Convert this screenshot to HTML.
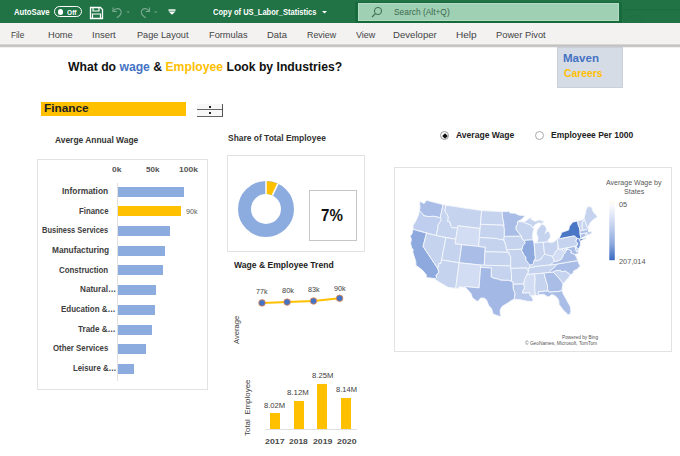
<!DOCTYPE html>
<html><head><meta charset="utf-8">
<style>
*{margin:0;padding:0;box-sizing:border-box}
html,body{width:680px;height:456px;overflow:hidden;background:#fff;font-family:"Liberation Sans",sans-serif}
.a{position:absolute;white-space:nowrap}
#tb{position:absolute;left:0;top:0;width:680px;height:23px;background:#217346}
#rb{position:absolute;left:0;top:23px;width:680px;height:21px;background:#f3f2f1}
#rbl{position:absolute;left:0;top:44px;width:680px;height:3px;background:linear-gradient(#e2e1e0,#bdbcbb 60%,#cfcfcf)}
#rbl2{position:absolute;left:0;top:47px;width:680px;height:1px;background:#f1f1f1}
.tab{position:absolute;top:29px;font-size:9.4px;line-height:11px;color:#444}
.wt{color:#fff}
.lbl{font-size:8.6px;color:#333;font-weight:bold}
.cat{position:absolute;font-size:8px;color:#404040;text-align:right;width:80px;line-height:10px;font-weight:bold}
.bar{position:absolute;background:#8cabdf;height:10px;left:117.5px}
.box{position:absolute;border:1px solid #e2e2e2;background:#fff}
.dl{position:absolute;font-size:7.2px;color:#404040;line-height:9px}
.yr{position:absolute;font-size:8.4px;color:#404040;line-height:10px;font-weight:bold}
</style></head><body>
<div id="tb"></div>
<div id="rb"></div>
<div id="rbl"></div>
<div id="rbl2"></div>
<!-- title bar -->
<div class="a" style="left:54.1px;top:5.5px;width:27.7px;height:11.8px;border:1.3px solid #fff;border-radius:6px"></div>
<div class="a" style="left:57.7px;top:9px;width:5.6px;height:5.6px;background:#fff;border-radius:50%"></div>
<svg class="a" style="left:89px;top:6px" width="15" height="14" viewBox="0 0 15 14">
<path d="M1.5 1.5h10l2 2v9h-12z" fill="none" stroke="#fff" stroke-width="1.3"/>
<path d="M4 1.5v3.5h6v-3.5" fill="none" stroke="#fff" stroke-width="1.2"/>
<path d="M3.5 12.5v-4.5h8v4.5" fill="none" stroke="#fff" stroke-width="1.2"/>
</svg>
<svg class="a" style="left:110px;top:5px;opacity:.4" width="50" height="14" viewBox="0 0 50 14">
<path d="M3 2.5v4h4" fill="none" stroke="#fff" stroke-width="1.1"/>
<path d="M3.3 6.3c1.5-2.5 4.5-3.5 6.5-2s2 5-1 7l-2 1.5" fill="none" stroke="#fff" stroke-width="1.1"/>
<path d="M16.5 6.5h3.4l-1.7 1.6z" fill="#fff"/>
<path d="M39.5 2.5v4h-4" fill="none" stroke="#fff" stroke-width="1.1"/>
<path d="M39.2 6.3c-1.5-2.5-4.5-3.5-6.5-2s-2 5 1 7l2 1.5" fill="none" stroke="#fff" stroke-width="1.1"/>
<path d="M44 6.5h3.4l-1.7 1.6z" fill="#fff"/>
</svg>
<svg class="a" style="left:168px;top:8.5px" width="8" height="6" viewBox="0 0 8 6"><path d="M0.5 0.3h7v1.5h-7z" fill="#fff"/><path d="M0.5 2.6h7l-3.5 3.2z" fill="#fff"/></svg>
<svg class="a" style="left:321.5px;top:10.5px" width="5" height="3" viewBox="0 0 5 3"><path d="M0 0h5l-2.5 2.6z" fill="#fff"/></svg>
<div class="a" style="left:355px;top:1.6px;width:267px;height:21px;background:#176a3b"></div>
<div class="a" style="left:357.6px;top:2.9px;width:261.7px;height:18px;background:#a0d0b3;border:1px solid #b2dcc3"></div>
<div class="a" style="left:623px;top:9px;width:57px;height:1.5px;background:#1d6a3f;opacity:.6"></div>
<div class="a" style="left:620px;top:0;width:60px;height:23px;overflow:hidden"><div class="a" style="left:5px;top:15px;width:18px;height:18px;border:1px solid #1b6a3c;border-radius:50%;opacity:.5"></div></div>
<svg class="a" style="left:371px;top:6px" width="12" height="12" viewBox="0 0 12 12">
<circle cx="7" cy="5" r="3.6" fill="none" stroke="#3b6b50" stroke-width="1"/><path d="M4.4 7.6L1 11" stroke="#3b6b50" stroke-width="1.1"/>
</svg>
<!-- ribbon tabs -->
<!-- sheet title -->
<div class="a" style="left:557px;top:47px;width:66px;height:41px;background:#d6dce5;border:1px solid #c9d0da"></div>
<!-- finance selector -->
<div class="a" style="left:41.2px;top:102px;width:144.8px;height:14.4px;background:#ffc000"></div>
<div class="a" style="left:197px;top:104px;width:26px;height:13px;background:#f7f7f7;border-right:1px solid #555"></div>
<div class="a" style="left:197px;top:109px;width:25px;height:1px;background:#666"></div>
<div class="a" style="left:197px;top:116px;width:25px;height:1px;background:#666"></div>
<div class="a" style="left:209px;top:105.5px;width:2px;height:2px;background:#222"></div>
<div class="a" style="left:209px;top:112px;width:2px;height:2px;background:#222"></div>
<!-- labels -->
<!-- radios -->
<div class="a" style="left:440px;top:131px;width:9px;height:9px;border:1px solid #999;border-radius:50%;background:#fff"></div>
<div class="a" style="left:442.5px;top:133.5px;width:4px;height:4px;background:#111;transform:rotate(45deg)"></div>
<div class="a" style="left:535px;top:131px;width:9px;height:9px;border:1px solid #aaa;border-radius:50%;background:#fff"></div>
<!-- bar chart -->
<div class="box" style="left:37px;top:159px;width:171px;height:231px"></div>
<div class="a" style="left:117px;top:183px;width:1px;height:198px;background:#e0e0e0"></div>
<div class="bar" style="top:186.5px;width:66.6px;background:#8cabdf"></div>
<div class="bar" style="top:206.3px;width:63.7px;background:#ffc000"></div>
<div class="bar" style="top:226.0px;width:52.8px;background:#8cabdf"></div>
<div class="bar" style="top:245.7px;width:47.9px;background:#8cabdf"></div>
<div class="bar" style="top:265.4px;width:45.1px;background:#8cabdf"></div>
<div class="bar" style="top:285.1px;width:38.5px;background:#8cabdf"></div>
<div class="bar" style="top:304.8px;width:37.5px;background:#8cabdf"></div>
<div class="bar" style="top:324.5px;width:34.3px;background:#8cabdf"></div>
<div class="bar" style="top:344.2px;width:28.7px;background:#8cabdf"></div>
<div class="bar" style="top:363.9px;width:16.2px;background:#8cabdf"></div>
<!-- donut -->
<div class="box" style="left:226.5px;top:155px;width:138px;height:96.5px"></div>
<svg class="a" style="left:226px;top:169px" width="80" height="80" viewBox="0 0 80 80">
<circle cx="40" cy="40" r="21.5" fill="none" stroke="#8cabdf" stroke-width="13"/>
<path d="M40.00,18.50 A21.5,21.5 0 0 1 49.15,20.55" fill="none" stroke="#ffc000" stroke-width="13"/><line x1="40.00" y1="25.00" x2="40.00" y2="12.00" stroke="#fff" stroke-width="1.5"/><line x1="46.39" y1="26.43" x2="51.92" y2="14.66" stroke="#fff" stroke-width="1.5"/>
</svg>
<div class="box" style="left:308.5px;top:190px;width:48px;height:50.5px;border-color:#c6c6c6"></div>
<!-- trend -->
<svg class="a" style="left:225px;top:280px" width="140" height="70" viewBox="0 0 140 70">
<polyline points="37,22.9 62.1,22.1 88.5,21 114.6,18.3" fill="none" stroke="#ffc000" stroke-width="2"/>
<circle cx="37" cy="22.9" r="3.3" fill="#4472c4" stroke="#f08a4b" stroke-width=".8"/>
<circle cx="62.1" cy="22.1" r="3.3" fill="#4472c4" stroke="#f08a4b" stroke-width=".8"/>
<circle cx="88.5" cy="21" r="3.3" fill="#4472c4" stroke="#f08a4b" stroke-width=".8"/>
<circle cx="114.6" cy="18.3" r="3.3" fill="#4472c4" stroke="#f08a4b" stroke-width=".8"/>
</svg>
<div class="a" style="left:231.8px;top:344.4px;font-size:7.65px;line-height:10px;color:#404040;transform:rotate(-90deg);transform-origin:0 0">Average</div>
<!-- employee bars -->
<div class="a" style="left:265px;top:429px;width:92px;height:1px;background:#e0e0e0"></div>
<div class="a" style="left:270px;top:413px;width:9.5px;height:16px;background:#ffc000"></div>
<div class="a" style="left:294px;top:400.5px;width:9.5px;height:28.5px;background:#ffc000"></div>
<div class="a" style="left:317px;top:383.5px;width:10px;height:45.5px;background:#ffc000"></div>
<div class="a" style="left:341px;top:398px;width:10px;height:31px;background:#ffc000"></div>
<div class="a" style="left:243px;top:436.2px;font-size:7.95px;line-height:10px;color:#404040;transform:rotate(-90deg);transform-origin:0 0">Total&nbsp; Employee</div>
<!-- map -->
<div class="box" style="left:394px;top:167px;width:278px;height:185px"></div>
<svg class="a" style="left:0;top:0" width="680" height="456" viewBox="0 0 680 456">
<g stroke="#f4f7fc" stroke-width=".9" stroke-linejoin="round">
<path fill="#a9bde6" d="M419.9,201.3 424.1,203.6 426.5,200.3 443.1,204.6 440.6,215.9 440.5,217.8 434.1,216.3 429.2,216.5 426.9,216.4 423.8,215.7 422.4,213.7 421.2,212.2 419.3,211.1 420.0,207.8 419.7,203.4Z"/>
<path fill="#bfcdee" d="M419.3,211.1 421.2,212.2 422.4,213.7 423.8,215.7 426.9,216.4 429.2,216.5 434.1,216.3 440.5,217.8 441.4,219.9 439.6,222.7 437.9,225.2 438.0,227.5 436.2,235.5 413.0,229.3 413.0,225.5 416.0,220.7 418.6,214.4Z"/>
<path fill="#8ea9de" d="M413.0,229.3 426.5,233.2 423.1,246.4 437.8,268.5 438.9,272.1 436.1,275.6 436.5,277.5 435.4,278.6 426.3,277.6 426.3,274.9 423.0,270.8 420.5,268.6 415.9,265.5 415.8,261.5 413.8,255.3 412.8,252.1 413.2,249.4 411.7,248.0 410.6,243.4 411.4,239.4 410.2,236.1 412.0,233.8Z"/>
<path fill="#c5d3ef" d="M426.5,233.2 445.9,237.5 440.9,263.5 438.9,263.6 437.8,268.5 423.1,246.4Z"/>
<path fill="#c5d3ef" d="M443.1,204.6 446.0,205.2 445.0,209.7 445.6,212.4 446.6,213.4 448.2,216.5 448.1,220.1 447.5,221.4 449.8,221.6 451.4,227.0 451.9,227.5 457.6,228.0 455.8,239.2 436.2,235.5 438.0,227.5 437.9,225.2 439.6,222.7 441.4,219.9 440.5,217.8 440.6,215.9Z"/>
<path fill="#c5d3ef" d="M446.0,205.2 481.6,210.6 480.1,228.5 457.9,225.8 457.6,228.0 451.9,227.5 451.4,227.0 449.8,221.6 447.5,221.4 448.1,220.1 448.2,216.5 446.6,213.4 445.6,212.4 445.0,209.7Z"/>
<path fill="#d2dcf2" d="M457.9,225.8 480.1,228.5 478.6,246.6 455.0,243.8Z"/>
<path fill="#c5d3ef" d="M445.9,237.5 455.8,239.2 455.0,243.8 461.7,244.7 459.2,262.8 441.6,259.9Z"/>
<path fill="#a9bde6" d="M461.7,244.7 485.3,247.1 484.2,265.4 459.2,262.8Z"/>
<path fill="#c5d3ef" d="M441.6,259.9 459.2,262.8 455.7,288.4 448.0,287.3 434.9,279.6 435.4,278.6 436.5,277.5 436.1,275.6 438.9,272.1 437.8,268.5 438.9,263.6 440.9,263.5Z"/>
<path fill="#d2dcf2" d="M459.2,262.8 480.8,265.1 479.1,287.9 465.3,286.6 465.6,287.6 459.2,286.8 458.9,288.9 455.7,288.4Z"/>
<path fill="#c5d3ef" d="M481.6,210.6 502.1,211.6 502.4,216.0 503.2,220.5 504.0,225.1 504.0,225.3 480.5,224.3Z"/>
<path fill="#c5d3ef" d="M480.5,224.3 504.0,225.3 504.0,228.2 504.4,228.2 504.3,236.4 503.8,240.0 504.3,241.0 501.8,239.3 499.2,239.6 497.6,238.6 479.3,237.5Z"/>
<path fill="#c5d3ef" d="M479.3,237.5 497.6,238.6 499.2,239.6 501.8,239.3 504.3,241.0 505.5,244.1 506.1,246.4 506.6,249.7 508.2,252.3 485.0,251.7 485.3,247.1 478.6,246.6Z"/>
<path fill="#c5d3ef" d="M485.0,251.7 508.2,252.3 509.4,252.8 508.9,254.2 510.7,256.2 510.7,266.0 484.2,265.4Z"/>
<path fill="#c5d3ef" d="M480.8,265.1 510.7,266.0 511.5,273.3 511.5,281.3 507.7,280.2 505.8,280.4 502.4,280.2 500.2,280.1 498.4,279.2 493.9,278.2 491.0,276.9 491.4,268.0 480.6,267.4Z"/>
<path fill="#a3b8e4" d="M480.6,267.4 491.4,268.0 491.0,276.9 493.9,278.2 498.4,279.2 500.2,280.1 502.4,280.2 505.8,280.4 507.7,280.2 511.5,281.3 513.1,281.7 513.2,284.1 513.3,288.8 515.1,293.3 514.8,296.4 514.2,299.2 510.9,300.8 509.3,302.0 505.8,304.2 502.6,306.0 501.0,308.3 500.1,310.5 500.3,313.7 501.1,316.1 499.6,316.3 496.8,315.4 493.1,313.9 491.7,308.9 488.6,305.2 486.5,300.1 484.6,298.2 480.7,298.0 478.5,300.5 477.3,301.4 475.0,299.8 472.4,297.8 470.9,293.5 467.4,289.5 465.6,287.6 465.3,286.6 479.1,287.9Z"/>
<path fill="#b7c8eb" d="M513.2,284.1 524.0,283.8 524.0,285.7 524.7,287.9 523.1,290.7 522.6,293.0 529.9,292.6 529.7,294.4 530.8,296.2 531.6,296.8 533.4,300.1 531.5,301.6 527.9,301.3 523.9,300.6 520.3,299.7 514.2,299.2 514.8,296.4 515.1,293.3 513.3,288.8Z"/>
<path fill="#c5d3ef" d="M510.8,268.3 526.8,267.7 527.2,269.9 528.6,269.9 527.8,274.0 526.7,275.0 525.8,277.3 524.4,280.2 524.0,283.8 513.2,284.1 513.1,281.7 511.5,281.3 511.5,273.3Z"/>
<path fill="#c5d3ef" d="M506.6,249.7 520.3,249.2 521.5,250.1 522.6,251.9 524.2,255.5 526.0,257.2 525.8,260.0 528.9,263.9 530.1,265.3 529.2,267.5 528.6,269.9 527.2,269.9 526.8,267.7 510.8,268.3 510.7,266.0 510.7,256.2 508.9,254.2 509.4,252.8 508.2,252.3Z"/>
<path fill="#c5d3ef" d="M504.3,236.4 521.4,236.0 521.9,238.2 523.5,240.4 525.3,242.2 524.9,243.6 522.8,245.5 522.4,248.7 520.3,249.2 506.6,249.7 506.1,246.4 505.5,244.1 504.3,241.0 503.8,240.0Z"/>
<path fill="#a9bde6" d="M502.1,211.6 508.3,211.6 508.3,209.9 510.0,212.9 514.9,213.2 519.5,215.3 525.3,215.5 521.8,219.2 517.9,221.4 517.4,224.4 516.1,226.7 516.2,229.4 517.7,231.6 521.4,236.0 504.3,236.4 504.4,228.2 504.0,228.2 504.0,225.1 503.2,220.5 502.4,216.0Z"/>
<path fill="#c5d3ef" d="M517.9,221.4 523.3,222.0 527.5,223.8 530.7,224.9 532.5,227.9 534.4,226.9 533.2,231.5 532.5,235.2 532.9,239.8 523.5,240.4 521.9,238.2 521.4,236.0 517.7,231.6 516.2,229.4 516.1,226.7 517.4,224.4Z"/>
<path fill="#8ea9de" d="M523.5,240.4 532.9,239.8 534.1,243.3 535.1,254.0 535.0,255.6 535.5,256.9 535.3,258.8 533.9,261.2 533.8,262.6 532.9,264.5 530.1,265.3 528.9,263.9 525.8,260.0 526.0,257.2 524.2,255.5 522.6,251.9 521.5,250.1 522.4,248.7 522.8,245.5 524.9,243.6 525.3,242.2Z"/>
<path fill="#c5d3ef" d="M534.1,243.0 543.2,242.1 544.6,254.2 542.8,256.2 541.0,259.2 539.3,259.8 537.2,260.9 535.4,260.4 533.9,261.2 535.3,258.8 535.5,256.9 535.0,255.6 535.1,254.0Z"/>
<path fill="#c5d3ef" d="M543.2,242.1 547.7,241.7 550.4,242.6 553.7,241.9 557.3,239.1 558.2,245.1 558.1,247.2 557.6,249.6 555.3,252.3 553.9,255.2 552.7,256.3 550.1,255.8 548.7,255.7 546.5,254.6 544.6,254.2Z"/>
<path fill="#c5d3ef" d="M536.5,242.8 543.2,242.1 547.7,241.7 548.3,239.9 550.3,237.3 550.4,235.5 549.2,231.5 546.9,231.6 545.1,233.4 546.6,229.6 545.9,226.9 543.7,224.9 541.4,223.9 540.6,225.8 539.2,227.3 537.2,229.8 536.6,233.5 538.1,237.9 537.4,241.2Z"/>
<path fill="#c5d3ef" d="M523.3,222.0 526.0,220.8 529.5,218.2 531.6,217.4 531.2,219.5 535.4,221.3 539.9,219.7 541.3,220.9 542.9,220.5 543.7,222.4 541.3,223.4 538.7,222.8 536.3,224.0 534.2,225.5 532.5,227.9 530.7,224.9 527.5,223.8Z"/>
<path fill="#c5d3ef" d="M529.2,267.5 534.4,267.1 534.3,266.3 535.1,266.5 550.0,265.0 552.3,263.5 554.4,261.2 552.8,257.4 552.7,256.3 550.1,255.8 548.7,255.7 546.5,254.6 544.6,254.2 542.8,256.2 541.0,259.2 539.3,259.8 537.2,260.9 535.4,260.4 533.9,261.2 533.8,262.6 532.9,264.5 530.1,265.3Z"/>
<path fill="#c5d3ef" d="M526.7,274.5 534.4,274.0 548.6,272.6 549.6,271.5 552.9,268.5 555.2,266.6 557.2,264.0 550.0,265.0 535.1,266.5 534.3,266.3 534.4,267.1 529.2,267.5 528.6,269.9 527.8,274.0Z"/>
<path fill="#d2dcf2" d="M526.7,274.5 534.4,274.0 535.2,278.5 534.6,288.1 535.4,294.9 531.5,295.7 530.8,296.2 529.7,294.4 529.9,292.6 522.6,293.0 523.1,290.7 524.7,287.9 524.0,285.7 524.0,283.8 524.4,280.2 525.8,277.3 526.7,275.0Z"/>
<path fill="#c5d3ef" d="M534.4,274.0 543.9,273.1 546.4,282.0 547.6,285.5 547.5,288.3 548.2,290.9 538.2,291.9 538.9,294.8 537.0,295.5 535.4,294.9 534.6,288.1 535.2,278.5Z"/>
<path fill="#a9bde6" d="M543.9,273.1 553.0,272.0 554.3,273.2 557.0,276.0 559.7,278.8 563.1,283.8 562.4,286.7 562.0,290.4 560.0,291.3 548.9,292.2 548.2,290.9 547.5,288.3 547.6,285.5 546.4,282.0Z"/>
<path fill="#a9bde6" d="M538.2,291.9 548.2,290.9 548.9,292.2 560.0,291.3 562.0,290.4 563.2,293.9 565.4,297.7 567.4,301.5 570.3,306.5 570.9,311.4 570.1,314.2 567.7,315.1 566.6,313.0 563.7,310.7 561.6,307.8 559.1,304.6 558.8,301.0 557.8,298.4 554.7,295.6 551.8,294.6 548.9,296.8 547.3,296.5 543.5,294.2 538.9,294.8Z"/>
<path fill="#c5d3ef" d="M553.0,272.0 555.8,270.6 560.6,270.2 561.2,271.7 565.5,271.0 570.5,274.5 568.6,277.8 564.4,282.2 563.1,283.8 559.7,278.8 557.0,276.0 554.3,273.2Z"/>
<path fill="#a9bde6" d="M548.6,272.6 553.0,272.0 555.8,270.6 560.6,270.2 561.2,271.7 565.5,271.0 570.5,274.5 572.8,273.8 573.8,270.8 577.2,269.2 580.3,266.0 578.5,262.9 577.7,260.5 557.2,264.0 555.2,266.6 552.9,268.5 549.6,271.5Z"/>
<path fill="#a9bde6" d="M550.0,265.0 557.2,264.0 577.7,260.5 576.5,257.2 574.9,254.5 572.5,253.4 571.0,253.0 571.5,251.0 569.6,249.8 568.7,249.4 566.6,249.4 565.2,252.5 563.4,254.6 562.2,257.6 561.3,259.2 559.0,260.5 556.6,261.3 554.4,261.2 552.3,263.5Z"/>
<path fill="#d2dcf2" d="M552.7,256.3 552.8,257.4 554.4,261.2 556.6,261.3 559.0,260.5 561.3,259.2 562.2,257.6 563.4,254.6 565.2,252.5 566.6,249.4 568.7,249.4 567.6,248.3 565.9,249.0 564.3,249.6 562.9,251.0 562.5,248.7 558.9,249.3 558.2,245.1 558.1,247.2 557.6,249.6 555.3,252.3 553.9,255.2Z"/>
<path fill="#a9bde6" d="M562.5,248.7 574.9,246.2 576.5,251.8 578.7,251.4 578.4,253.4 576.3,254.2 574.9,254.5 572.5,253.4 571.0,253.0 571.5,251.0 569.6,249.8 568.7,249.4 567.6,248.3 565.9,249.0 564.3,249.6 562.9,251.0Z"/>
<path fill="#c5d3ef" d="M574.9,246.2 576.2,245.6 575.9,246.6 578.4,249.8 578.7,251.4 576.5,251.8Z"/>
<path fill="#c5d3ef" d="M557.3,239.1 559.5,237.4 559.7,238.6 574.2,235.8 575.2,236.5 577.0,238.2 576.1,240.7 576.1,241.9 578.0,243.5 576.2,245.6 574.9,246.2 558.9,249.3Z"/>
<path fill="#7f9cd8" d="M577.0,238.2 579.9,239.1 579.9,240.5 580.5,242.7 580.6,245.0 578.7,249.1 576.1,247.0 578.0,243.5 576.1,241.9 576.1,240.7Z"/>
<path fill="#4a76c6" d="M559.7,238.6 559.5,237.4 561.3,234.2 561.1,232.6 564.4,231.5 568.7,229.9 569.3,226.6 572.4,222.4 573.3,222.0 577.5,221.0 578.4,225.4 579.3,227.3 580.1,230.9 580.1,234.1 580.9,237.5 580.8,238.9 584.3,238.3 586.6,237.1 584.8,238.9 580.4,241.1 579.8,240.8 579.9,239.1 577.0,238.2 575.2,236.5 574.2,235.8Z"/>
<path fill="#a9bde6" d="M580.1,234.1 585.7,232.9 586.3,236.0 583.0,237.2 580.8,238.9 580.9,237.5Z"/>
<path fill="#c5d3ef" d="M585.7,232.9 587.0,232.5 588.0,233.8 588.5,234.6 586.3,236.0Z"/>
<path fill="#a9bde6" d="M580.1,234.1 580.1,230.9 582.8,230.3 586.5,229.5 587.9,228.3 588.8,229.1 587.9,231.0 589.6,232.2 591.4,231.2 591.9,233.0 590.0,234.0 588.5,234.6 588.0,233.8 587.0,232.5 585.7,232.9Z"/>
<path fill="#c5d3ef" d="M577.5,221.0 583.2,219.5 583.3,221.4 582.3,223.1 582.1,226.9 582.8,230.3 580.1,230.9 579.3,227.3 578.4,225.4Z"/>
<path fill="#c5d3ef" d="M583.2,219.5 584.1,217.9 585.9,223.5 586.7,226.4 588.0,227.4 587.9,228.3 586.5,229.5 582.8,230.3 582.1,226.9 582.3,223.1 583.3,221.4Z"/>
<path fill="#c5d3ef" d="M584.1,217.9 584.9,214.9 585.6,212.8 585.7,210.9 587.1,207.0 590.0,206.6 591.8,207.4 593.4,212.2 594.8,213.4 597.3,216.4 595.2,218.5 592.4,220.3 589.9,223.4 588.0,227.4 586.7,226.4 585.9,223.5Z"/>
</g>
<defs><linearGradient id="lg" x1="0" y1="0" x2="0" y2="1"><stop offset="0" stop-color="#fffbea"/><stop offset=".08" stop-color="#f8f9fd"/><stop offset=".4" stop-color="#c6d3ef"/><stop offset=".72" stop-color="#8eaade"/><stop offset="1" stop-color="#3a69c2"/></linearGradient></defs>
<rect x="609.3" y="201.2" width="5.5" height="59" fill="url(#lg)"/>
</svg>
<div class="a" style="left:13.98px;top:7.91px;font-size:9.10px;line-height:9.10px;font-weight:bold;color:#fff;transform:scaleX(0.848);transform-origin:0 0;">AutoSave</div>
<div class="a" style="left:67.39px;top:8.71px;font-size:7.76px;line-height:7.76px;font-weight:bold;color:#fff;transform:scaleX(0.851);transform-origin:0 0;">Off</div>
<div class="a" style="left:213.36px;top:8.00px;font-size:8.58px;line-height:8.58px;font-weight:bold;color:#fff;transform:scaleX(0.879);transform-origin:0 0;">Copy of US_Labor_Statistics</div>
<div class="a" style="left:393.64px;top:8.60px;font-size:8.17px;line-height:8.17px;font-weight:normal;color:#3b6a50;transform:scaleX(1.028);transform-origin:0 0;">Search (Alt+Q)</div>
<div class="a" style="left:11.06px;top:31.11px;font-size:9.00px;line-height:9.00px;font-weight:normal;color:#444;transform:scaleX(0.916);transform-origin:0 0;">File</div>
<div class="a" style="left:48.08px;top:31.11px;font-size:9.00px;line-height:9.00px;font-weight:normal;color:#444;transform:scaleX(1.029);transform-origin:0 0;">Home</div>
<div class="a" style="left:92.46px;top:31.11px;font-size:9.00px;line-height:9.00px;font-weight:normal;color:#444;transform:scaleX(1.053);transform-origin:0 0;">Insert</div>
<div class="a" style="left:137.28px;top:31.11px;font-size:9.00px;line-height:9.00px;font-weight:normal;color:#444;transform:scaleX(1.018);transform-origin:0 0;">Page Layout</div>
<div class="a" style="left:208.78px;top:31.11px;font-size:9.00px;line-height:9.00px;font-weight:normal;color:#444;transform:scaleX(1.027);transform-origin:0 0;">Formulas</div>
<div class="a" style="left:266.76px;top:31.11px;font-size:9.00px;line-height:9.00px;font-weight:normal;color:#444;transform:scaleX(1.048);transform-origin:0 0;">Data</div>
<div class="a" style="left:306.81px;top:31.11px;font-size:9.00px;line-height:9.00px;font-weight:normal;color:#444;transform:scaleX(0.986);transform-origin:0 0;">Review</div>
<div class="a" style="left:355.50px;top:31.11px;font-size:9.00px;line-height:9.00px;font-weight:normal;color:#444;transform:scaleX(1.002);transform-origin:0 0;">View</div>
<div class="a" style="left:393.25px;top:31.11px;font-size:9.00px;line-height:9.00px;font-weight:normal;color:#444;transform:scaleX(1.068);transform-origin:0 0;">Developer</div>
<div class="a" style="left:455.71px;top:31.11px;font-size:9.00px;line-height:9.00px;font-weight:normal;color:#444;transform:scaleX(1.118);transform-origin:0 0;">Help</div>
<div class="a" style="left:496.27px;top:31.11px;font-size:9.00px;line-height:9.00px;font-weight:normal;color:#444;transform:scaleX(1.035);transform-origin:0 0;">Power Pivot</div>
<div class="a" style="left:68.20px;top:60.80px;font-size:12.12px;line-height:12.12px;font-weight:bold;color:#111;transform:scaleX(1.006);transform-origin:0 0;">What do <span style="color:#4472c4">wage</span> &amp; <span style="color:#ffc000">Employee</span> Look by Industries?</div>
<div class="a" style="left:563.08px;top:52.81px;font-size:11.09px;line-height:11.09px;font-weight:bold;color:#4472c4;transform:scaleX(1.042);transform-origin:0 0;">Maven</div>
<div class="a" style="left:563.68px;top:68.02px;font-size:10.81px;line-height:10.81px;font-weight:bold;color:#ffc000;transform:scaleX(0.957);transform-origin:0 0;">Careers</div>
<div class="a" style="left:44.06px;top:102.52px;font-size:11.30px;line-height:11.30px;font-weight:bold;color:#222;transform:scaleX(1.047);transform-origin:0 0;">Finance</div>
<div class="a" style="left:55.17px;top:135.91px;font-size:8.44px;line-height:8.44px;font-weight:bold;color:#333;transform:scaleX(0.999);transform-origin:0 0;">Averge Annual Wage</div>
<div class="a" style="left:227.67px;top:133.70px;font-size:8.85px;line-height:8.85px;font-weight:bold;color:#333;transform:scaleX(0.954);transform-origin:0 0;">Share of Total Employee</div>
<div class="a" style="left:456.07px;top:131.01px;font-size:9.10px;line-height:9.10px;font-weight:bold;color:#222;transform:scaleX(0.940);transform-origin:0 0;">Average Wage</div>
<div class="a" style="left:550.87px;top:131.11px;font-size:8.31px;line-height:8.31px;font-weight:bold;color:#222;transform:scaleX(1.023);transform-origin:0 0;">Employeee Per 1000</div>
<div class="a" style="left:112.33px;top:166.82px;font-size:7.08px;line-height:7.08px;font-weight:bold;color:#555;transform:scaleX(1.208);transform-origin:0 0;">0k</div>
<div class="a" style="left:145.77px;top:166.82px;font-size:7.08px;line-height:7.08px;font-weight:bold;color:#555;transform:scaleX(1.149);transform-origin:0 0;">50k</div>
<div class="a" style="left:178.76px;top:166.82px;font-size:7.08px;line-height:7.08px;font-weight:bold;color:#555;transform:scaleX(1.211);transform-origin:0 0;">100k</div>
<div class="a" style="left:62.47px;top:187.11px;font-size:8.40px;line-height:8.40px;font-weight:bold;color:#404040;transform:scaleX(1.003);transform-origin:0 0;">Information</div>
<div class="a" style="left:79.01px;top:207.00px;font-size:8.40px;line-height:8.40px;font-weight:bold;color:#404040;transform:scaleX(0.932);transform-origin:0 0;">Finance</div>
<div class="a" style="left:42.43px;top:225.91px;font-size:8.40px;line-height:8.40px;font-weight:bold;color:#404040;transform:scaleX(0.893);transform-origin:0 0;">Business Services</div>
<div class="a" style="left:51.58px;top:245.91px;font-size:8.40px;line-height:8.40px;font-weight:bold;color:#404040;transform:scaleX(0.991);transform-origin:0 0;">Manufacturing</div>
<div class="a" style="left:59.45px;top:265.61px;font-size:8.40px;line-height:8.40px;font-weight:bold;color:#404040;transform:scaleX(0.944);transform-origin:0 0;">Construction</div>
<div class="a" style="left:79.59px;top:285.30px;font-size:8.40px;line-height:8.40px;font-weight:bold;color:#404040;transform:scaleX(0.972);transform-origin:0 0;">Natural…</div>
<div class="a" style="left:61.40px;top:305.00px;font-size:8.40px;line-height:8.40px;font-weight:bold;color:#404040;transform:scaleX(0.951);transform-origin:0 0;">Education &amp;…</div>
<div class="a" style="left:78.20px;top:324.71px;font-size:8.40px;line-height:8.40px;font-weight:bold;color:#404040;transform:scaleX(0.964);transform-origin:0 0;">Trade &amp;…</div>
<div class="a" style="left:52.95px;top:344.41px;font-size:8.40px;line-height:8.40px;font-weight:bold;color:#404040;transform:scaleX(0.935);transform-origin:0 0;">Other Services</div>
<div class="a" style="left:72.51px;top:364.11px;font-size:8.40px;line-height:8.40px;font-weight:bold;color:#404040;transform:scaleX(0.931);transform-origin:0 0;">Leisure &amp;…</div>
<div class="a" style="left:186.26px;top:209.11px;font-size:6.94px;line-height:6.94px;font-weight:normal;color:#595959;transform:scaleX(1.029);transform-origin:0 0;">90k</div>
<div class="a" style="left:321.28px;top:208.00px;font-size:16.78px;line-height:16.78px;font-weight:bold;color:#111;transform:scaleX(0.900);transform-origin:0 0;">7%</div>
<div class="a" style="left:234.40px;top:261.00px;font-size:9.19px;line-height:9.19px;font-weight:bold;color:#222;transform:scaleX(0.934);transform-origin:0 0;">Wage &amp; Employee Trend</div>
<div class="a" style="left:256.36px;top:288.00px;font-size:7.90px;line-height:7.90px;font-weight:normal;color:#404040;transform:scaleX(0.905);transform-origin:0 0;">77k</div>
<div class="a" style="left:282.07px;top:287.00px;font-size:7.90px;line-height:7.90px;font-weight:normal;color:#404040;transform:scaleX(0.943);transform-origin:0 0;">80k</div>
<div class="a" style="left:308.07px;top:286.00px;font-size:7.90px;line-height:7.90px;font-weight:normal;color:#404040;transform:scaleX(0.912);transform-origin:0 0;">83k</div>
<div class="a" style="left:334.06px;top:284.50px;font-size:7.90px;line-height:7.90px;font-weight:normal;color:#404040;transform:scaleX(0.913);transform-origin:0 0;">90k</div>
<div class="a" style="left:264.16px;top:402.71px;font-size:6.60px;line-height:6.60px;font-weight:normal;color:#404040;transform:scaleX(1.159);transform-origin:0 0;">8.02M</div>
<div class="a" style="left:287.36px;top:390.11px;font-size:6.60px;line-height:6.60px;font-weight:normal;color:#404040;transform:scaleX(1.187);transform-origin:0 0;">8.12M</div>
<div class="a" style="left:311.56px;top:373.30px;font-size:6.60px;line-height:6.60px;font-weight:normal;color:#404040;transform:scaleX(1.164);transform-origin:0 0;">8.25M</div>
<div class="a" style="left:336.16px;top:387.01px;font-size:6.60px;line-height:6.60px;font-weight:normal;color:#404040;transform:scaleX(1.142);transform-origin:0 0;">8.14M</div>
<div class="a" style="left:264.63px;top:437.71px;font-size:7.60px;line-height:7.60px;font-weight:bold;color:#4a4a4a;transform:scaleX(1.155);transform-origin:0 0;">2017</div>
<div class="a" style="left:289.04px;top:437.71px;font-size:7.60px;line-height:7.60px;font-weight:bold;color:#4a4a4a;transform:scaleX(1.110);transform-origin:0 0;">2018</div>
<div class="a" style="left:312.53px;top:437.71px;font-size:7.60px;line-height:7.60px;font-weight:bold;color:#4a4a4a;transform:scaleX(1.153);transform-origin:0 0;">2019</div>
<div class="a" style="left:336.72px;top:437.71px;font-size:7.60px;line-height:7.60px;font-weight:bold;color:#4a4a4a;transform:scaleX(1.161);transform-origin:0 0;">2020</div>
<div class="a" style="left:606.40px;top:178.81px;font-size:7.22px;line-height:7.22px;font-weight:normal;color:#595959;transform:scaleX(0.974);transform-origin:0 0;">Average Wage by</div>
<div class="a" style="left:623.58px;top:187.51px;font-size:7.25px;line-height:7.25px;font-weight:normal;color:#595959;transform:scaleX(0.985);transform-origin:0 0;">States</div>
<div class="a" style="left:618.77px;top:200.51px;font-size:7.54px;line-height:7.54px;font-weight:normal;color:#595959;transform:scaleX(0.982);transform-origin:0 0;">05</div>
<div class="a" style="left:618.66px;top:258.41px;font-size:7.68px;line-height:7.68px;font-weight:normal;color:#595959;transform:scaleX(0.956);transform-origin:0 0;">207,014</div>
<div class="a" style="left:561.93px;top:335.01px;font-size:5.45px;line-height:5.45px;font-weight:normal;color:#555;transform:scaleX(0.878);transform-origin:0 0;">Powered by Bing</div>
<div class="a" style="left:525.00px;top:340.75px;font-size:5.11px;line-height:5.11px;font-weight:normal;color:#555;transform:scaleX(0.941);transform-origin:0 0;">© GeoNames, Microsoft, TomTom</div>
</body></html>
